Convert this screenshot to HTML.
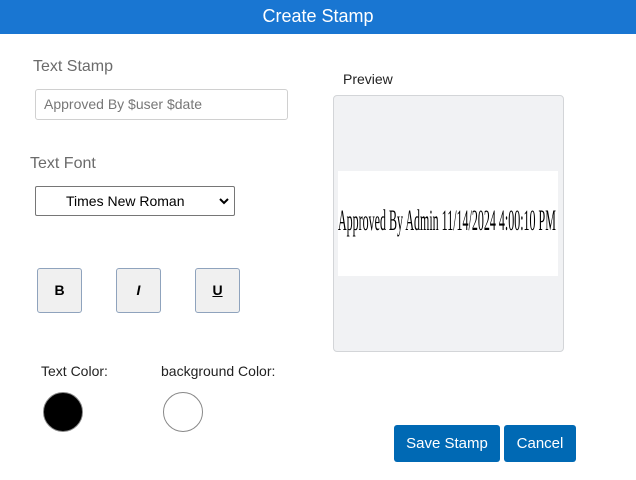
<!DOCTYPE html>
<html><head><style>
body{margin:0;width:636px;height:480px;background:#fff;font-family:"Liberation Sans",Arial,sans-serif;position:relative;overflow:hidden}
.a{position:absolute}
.hdr{left:0;top:0;width:636px;height:34px;background:#1976d2;color:#fff;font-size:18px;text-align:center;line-height:33px}
.lbl{color:#6b6b6b;font-size:16px}
.btn{width:45px;height:45px;border:1px solid #8fa3bd;border-radius:3px;background:#f0f0f0;font-size:14px;font-weight:bold;text-align:center;line-height:43px;box-sizing:border-box}
.pb{background:#0069b4;color:#fff;font-size:15px;text-align:center;border-radius:3px;height:37px;line-height:37px}
</style></head><body>
<div class="a hdr">Create Stamp</div>
<div class="a lbl" style="left:33px;top:58px">Text Stamp</div>
<div class="a" style="left:35px;top:89px;width:253px;height:31px;border:1px solid #d0d0d0;border-radius:3px;box-sizing:border-box;color:#777;font-size:14px;line-height:29px;padding-left:8px">Approved By $user $date</div>
<div class="a lbl" style="left:30px;top:155px">Text Font</div>
<div class="a" style="left:35px;top:186px;width:200px;height:30px;border:1px solid #767676;border-radius:2px;box-sizing:border-box;font-size:14px;line-height:28px;color:#000"><span style="position:absolute;left:30px">Times New Roman</span>
<svg style="position:absolute;left:183px;top:10px" width="10" height="8" viewBox="0 0 10 8"><path d="M1 2 L5 6 L9 2" stroke="#000" stroke-width="2" fill="none"/></svg></div>
<div class="a btn" style="left:37px;top:268px">B</div>
<div class="a btn" style="left:116px;top:268px;font-style:italic">I</div>
<div class="a btn" style="left:195px;top:268px;text-decoration:underline">U</div>
<div class="a" style="left:41px;top:363px;font-size:14px;color:#222">Text Color:</div>
<div class="a" style="left:161px;top:363px;font-size:14px;color:#222">background Color:</div>
<div class="a" style="left:43px;top:392px;width:40px;height:40px;border-radius:50%;background:#000;border:1px solid #888;box-sizing:border-box"></div>
<div class="a" style="left:163px;top:392px;width:40px;height:40px;border-radius:50%;background:#fff;border:1px solid #888;box-sizing:border-box"></div>
<div class="a" style="left:343px;top:71px;font-size:14px;color:#222">Preview</div>
<div class="a" style="left:333px;top:95px;width:231px;height:257px;background:#f1f2f4;border:1px solid #d3d5d8;border-radius:4px;box-sizing:border-box"></div>
<div class="a" style="left:338px;top:171px;width:220px;height:105px;background:#fff;overflow:hidden">
<div style="position:absolute;left:0;top:33px;white-space:nowrap;font-family:'Liberation Serif',serif;font-size:30px;transform-origin:0 0;transform:scaleX(0.40);color:#000">Approved By Admin 11/14/2024 4:00:10 PM</div></div>
<div class="a pb" style="left:394px;top:425px;width:106px">Save Stamp</div>
<div class="a pb" style="left:504px;top:425px;width:72px">Cancel</div>
</body></html>
